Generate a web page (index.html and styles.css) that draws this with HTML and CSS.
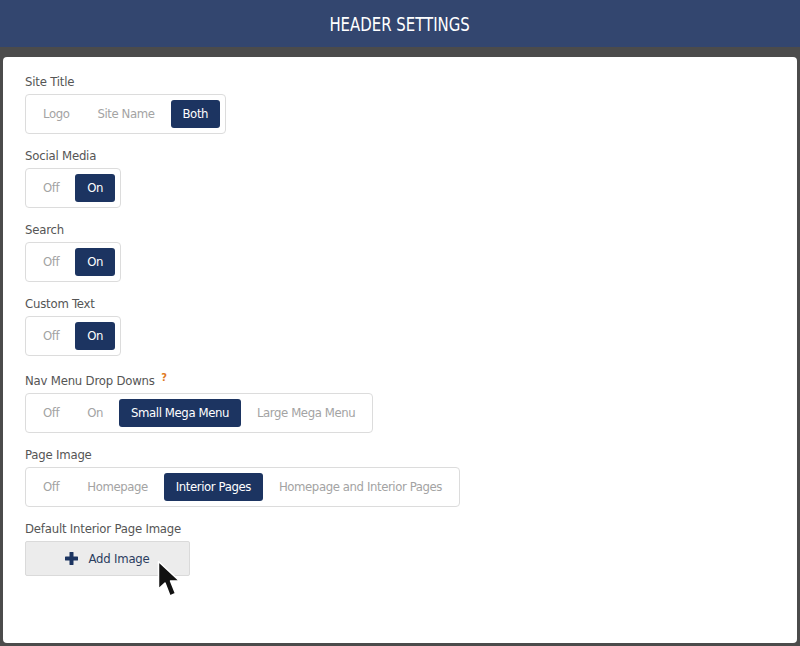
FILE: index.html
```html
<!DOCTYPE html>
<html lang="en">
<head>
    <meta charset="UTF-8">
    <meta name="viewport" content="width=device-width, initial-scale=1.0">
    <title>Header Settings</title>
    <link rel="stylesheet" href="styles.css">
</head>
<body>
    <div class="topbar"><span class="title">Header Settings</span></div>
    <div class="modal">
        <div class="field">
            <div class="label">Site Title</div>
            <div class="toggle">
                <span class="opt">Logo</span>
                <span class="opt">Site Name</span>
                <span class="opt active">Both</span>
            </div>
        </div>
        <div class="field">
            <div class="label">Social Media</div>
            <div class="toggle">
                <span class="opt">Off</span>
                <span class="opt active">On</span>
            </div>
        </div>
        <div class="field">
            <div class="label">Search</div>
            <div class="toggle">
                <span class="opt">Off</span>
                <span class="opt active">On</span>
            </div>
        </div>
        <div class="field">
            <div class="label">Custom Text</div>
            <div class="toggle">
                <span class="opt">Off</span>
                <span class="opt active">On</span>
            </div>
        </div>
        <div class="field">
            <div class="label">Nav Menu Drop Downs <span class="help">?</span></div>
            <div class="toggle">
                <span class="opt">Off</span>
                <span class="opt">On</span>
                <span class="opt active">Small Mega Menu</span>
                <span class="opt">Large Mega Menu</span>
            </div>
        </div>
        <div class="field">
            <div class="label">Page Image</div>
            <div class="toggle">
                <span class="opt">Off</span>
                <span class="opt">Homepage</span>
                <span class="opt active">Interior Pages</span>
                <span class="opt">Homepage and Interior Pages</span>
            </div>
        </div>
        <div class="field">
            <div class="label">Default Interior Page Image</div>
            <div class="add-wrap">
                <button class="add-btn">
                    <svg class="plus" width="13" height="13" viewBox="0 0 13 13"><path d="M6.5 1v11M1 6.5h11" stroke="#1c3461" stroke-width="4" stroke-linecap="round"/></svg>
                    Add Image
                </button>
                <svg class="cursor" width="26" height="40" viewBox="0 0 26 40">
                    <path d="M1.5 1.5 L1.5 29 L8 23 L13 36 L18.5 33.5 L13.5 21 L22.5 21 Z" fill="#111" stroke="#fff" stroke-width="1.5" stroke-linejoin="round"/>
                </svg>
            </div>
        </div>
    </div>
</body>
</html>
```

FILE: styles.css
```css
body {
    margin: 0;
    background-color: #4b4b4b;
    font-family: "DejaVu Sans Condensed", "Liberation Sans", sans-serif;
    height: 646px;
    overflow: hidden;
}
.topbar {
    height: 47px;
    background-color: #33466f;
    color: #fff;
    display: flex;
    justify-content: center;
    align-items: center;
    font-size: 20px;
    text-transform: uppercase;
}
.title {
    display: inline-block;
    transform: scaleX(0.83);
}
.modal {
    margin: 10px 3px 0;
    height: 586px;
    background-color: #fff;
    border-radius: 4px;
    padding: 15px 22px 0;
    box-sizing: border-box;
}
.field {
    margin-bottom: 12px;
}
.label {
    font-size: 13px;
    letter-spacing: -0.2px;
    line-height: 18px;
    color: #555;
    padding-top: 1px;
    margin-bottom: 3px;
}
.help {
    color: #e07a1f;
    font-weight: bold;
    font-size: 11px;
    vertical-align: 4px;
    margin-left: 3px;
}
.toggle {
    display: inline-flex;
    gap: 4px;
    padding: 5px;
    border: 1px solid #dcdcdc;
    border-radius: 4px;
}
.opt {
    height: 28px;
    line-height: 28px;
    padding: 0 12px;
    font-size: 13px;
    letter-spacing: -0.4px;
    color: #a3a3a3;
    border-radius: 3px;
}
.opt.active {
    background-color: #1c3461;
    color: #fff;
}
.add-wrap {
    position: relative;
}
.add-btn {
    display: flex;
    align-items: center;
    justify-content: center;
    gap: 10px;
    width: 165px;
    height: 35px;
    background-color: #ececec;
    border: 1px solid #dadada;
    border-radius: 2px;
    font-family: inherit;
    font-size: 13px;
    letter-spacing: -0.2px;
    color: #2b3d5f;
    padding: 0;
}
.cursor {
    position: absolute;
    left: 132px;
    top: 19px;
}
```
